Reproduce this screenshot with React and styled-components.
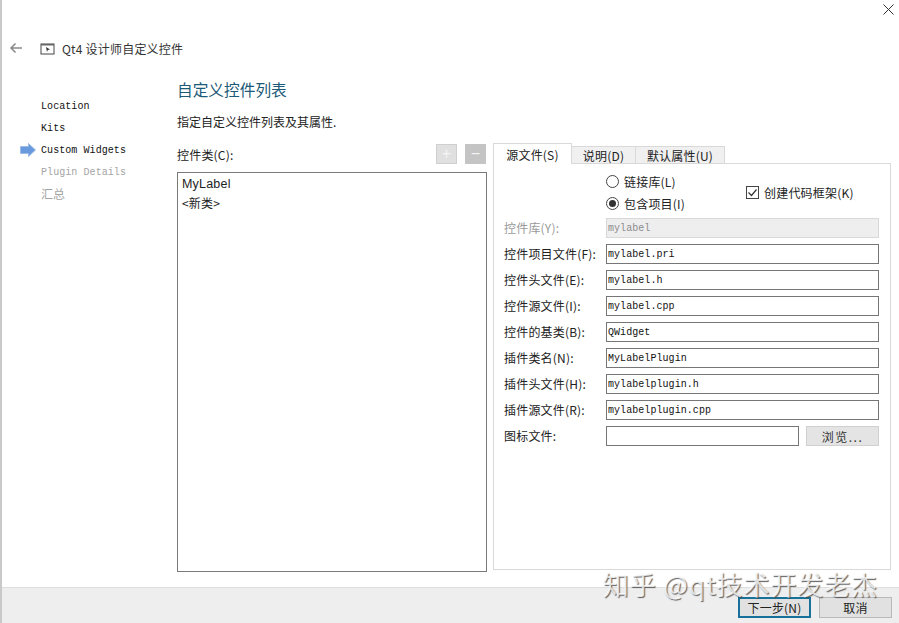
import React from 'react'
import styled, { createGlobalStyle } from 'styled-components'

const GlobalStyle = createGlobalStyle`
  html, body { margin: 0; padding: 0; background: #fff; }
  * { box-sizing: border-box; }
`
const ui = `"Noto Sans CJK SC", "Liberation Sans", sans-serif`
const mono = `"Liberation Mono", "DejaVu Sans Mono", "Noto Sans CJK SC", monospace`

const Wizard = styled.div`
  width: 899px;
  height: 623px;
  position: relative;
  display: flex;
  flex-direction: column;
  background: #fff;
  border-left: 2px solid #c9c9c9;
  color: #222;
  font-family: ${ui};
  font-size: 12px;
  letter-spacing: 0.2px;
  overflow: hidden;
  opacity: 0.999;
`
const Close = styled.svg`
  position: absolute;
  top: 4px;
  right: 5px;
  width: 11px;
  height: 11px;
`
const Header = styled.div`
  height: 28px;
  margin-top: 34px;
  padding-left: 7px;
  display: flex;
  align-items: center;
`
const BackIcon = styled.svg`
  width: 14px;
  height: 12px;
  margin-right: 17px;
`
const WinIcon = styled.svg`
  width: 15px;
  height: 13px;
  margin-right: 7px;
`
const HeaderTitle = styled.span`
  font-size: 12px;
  color: #333;
`
const Body = styled.div`
  flex: 1;
  display: flex;
  min-height: 0;
`
const Steps = styled.div`
  width: 175px;
  padding-top: 33px;
  display: flex;
  flex-direction: column;
  flex-shrink: 0;
`
const Step = styled.div`
  height: 22px;
  padding-left: 17px;
  display: flex;
  align-items: center;
  position: relative;
  font-family: ${mono};
  font-size: ${(p) => (p.$cjk ? '12px' : '10px')};
  letter-spacing: 0.07px;
  color: ${(p) => (p.$off ? '#a4a4a4' : '#111')};
`
const StepName = styled.span`
  margin-left: 22px;
`
const StepArrow = styled.svg`
  position: absolute;
  left: 18px;
  top: 4px;
  width: 16px;
  height: 14px;
`
const Page = styled.div`
  flex: 1;
  display: flex;
  flex-direction: column;
  min-width: 0;
`
const PageTitle = styled.div`
  font-size: 15.7px;
  line-height: 22px;
  height: 22px;
  margin-top: 17px;
  letter-spacing: 0;
  color: #1c5a78;
`
const PageSub = styled.div`
  font-size: 12px;
  line-height: 16px;
  margin-top: 13px;
  letter-spacing: 0;
`
const Columns = styled.div`
  margin-top: 13px;
  display: flex;
  gap: 6px;
`
const ListColumn = styled.div`
  width: 310px;
  display: flex;
  flex-direction: column;
`
const ListHead = styled.div`
  height: 22px;
  display: flex;
  align-items: center;
  justify-content: space-between;
  margin-bottom: 7px;
  padding-right: 1px;
`
const ListTools = styled.div`
  display: flex;
  gap: 8px;
`
const ToolButton = styled.div`
  width: 21px;
  height: 20px;
  display: flex;
  align-items: center;
  justify-content: center;
  background: ${(p) => (p.$dark ? '#c4c4c4' : '#e0e0e0')};
  border: 1px solid ${(p) => (p.$dark ? '#c4c4c4' : '#cfcfcf')};
  color: #f4f4f4;
  font-family: "Liberation Sans", sans-serif;
  font-size: 16px;
  line-height: 1;
`
const ClassList = styled.div`
  width: 310px;
  height: 400px;
  border: 1px solid #7a7a7a;
  padding: 2px 4px;
`
const ListItem = styled.div`
  font-size: ${(p) => (p.$big ? '12.5px' : '12px')};
  line-height: ${(p) => (p.$big ? '18px' : '19px')};
  font-family: ${(p) => (p.$big ? `"Liberation Sans", sans-serif` : ui)};
`
const TabColumn = styled.div`
  width: 398px;
  display: flex;
  flex-direction: column;
`
const TabBar = styled.div`
  display: flex;
  height: 21px;
  align-items: flex-end;
  position: relative;
  z-index: 1;
  margin-bottom: -1px;
`
const Tab = styled.div`
  height: ${(p) => (p.$active ? '21px' : '18px')};
  width: ${(p) => p.$w}px;
  display: flex;
  align-items: center;
  justify-content: center;
  font-size: 12px;
  background: ${(p) => (p.$active ? '#fff' : '#f0f0f0')};
  border: 1px solid #d9d9d9;
  border-bottom: ${(p) => (p.$active ? 'none' : '1px solid #d9d9d9')};
  margin-left: ${(p) => (p.$active ? '0' : '-1px')};
`
const TabPanel = styled.div`
  height: 407px;
  border: 1px solid #d9d9d9;
  padding: 7px 11px 0 10px;
`
const Choices = styled.div`
  height: 47px;
  display: flex;
`
const Radios = styled.div`
  width: 140px;
  margin-left: 102px;
  padding-top: 1px;
  display: flex;
  flex-direction: column;
  gap: 3px;
`
const OptionRow = styled.label`
  display: flex;
  align-items: center;
  height: 19px;
  gap: 5px;
`
const Radio = styled.span`
  width: 13px;
  height: 13px;
  border-radius: 50%;
  border: 1px solid #444;
  background: #fff;
  display: flex;
  align-items: center;
  justify-content: center;
  &::after {
    content: '';
    width: 7px;
    height: 7px;
    border-radius: 50%;
    background: ${(p) => (p.$on ? '#333' : 'transparent')};
  }
`
const CheckWrap = styled.div`
  padding-top: 12px;
`
const CheckBox = styled.svg`
  width: 13px;
  height: 13px;
`
const FormRows = styled.div`
  display: flex;
  flex-direction: column;
  gap: 6px;
`
const FormRow = styled.div`
  height: 20px;
  display: flex;
  align-items: center;
`
const FieldLabel = styled.div`
  width: 102px;
  flex-shrink: 0;
  padding-bottom: 2px;
  color: ${(p) => (p.$off ? '#9a9a9a' : '#222')};
  white-space: nowrap;
`
const Field = styled.div`
  width: ${(p) => (p.$w ? `${p.$w}px` : '274px')};
  height: 20px;
  padding: 1px 1px 0;
  display: flex;
  align-items: center;
  border: 1px solid ${(p) => (p.$off ? '#d8d8d8' : '#767676')};
  background: ${(p) => (p.$off ? '#eeeeee' : '#fff')};
  color: ${(p) => (p.$off ? '#8c8c8c' : '#111')};
  font-family: ${mono};
  font-size: 10px;
  letter-spacing: 0.06px;
`
const BrowseButton = styled.div`
  width: 73px;
  height: 20px;
  margin-left: 7px;
  display: flex;
  align-items: center;
  justify-content: center;
  background: #e4e4e4;
  border: 1px solid #d0d0d0;
  color: #333;
  letter-spacing: 1.5px;
`
const Footer = styled.div`
  height: 36px;
  background: #eeeeee;
  border-top: 1px solid #dedede;
  display: flex;
  align-items: flex-start;
  justify-content: flex-end;
  gap: 8px;
  padding: 9px 7px 0 0;
`
const FootButton = styled.div`
  width: 73px;
  height: 21px;
  display: flex;
  align-items: center;
  justify-content: center;
  background: #e1e1e1;
  border: ${(p) => (p.$primary ? '2px solid #17719a' : '1px solid #b9b9b9')};
`
const Watermark = styled.div`
  position: absolute;
  right: 21px;
  top: 570px;
  font-size: 26px;
  line-height: 28px;
  color: rgba(255, 255, 255, 0.8);
  text-shadow: 1px 1px 1px rgba(70, 70, 70, 0.85);
  letter-spacing: 0.9px;
  white-space: nowrap;
`

const fields = [
  ['控件项目文件(F):', 'mylabel.pri'],
  ['控件头文件(E):', 'mylabel.h'],
  ['控件源文件(I):', 'mylabel.cpp'],
  ['控件的基类(B):', 'QWidget'],
  ['插件类名(N):', 'MyLabelPlugin'],
  ['插件头文件(H):', 'mylabelplugin.h'],
  ['插件源文件(R):', 'mylabelplugin.cpp'],
]

const App = () => {
  return (
    <Wizard>
      <GlobalStyle />
      <Close viewBox="0 0 11 11">
        <path d="M0.5 0.5 L10.5 10.5 M10.5 0.5 L0.5 10.5" stroke="#333" strokeWidth="1" fill="none" />
      </Close>
      <Header>
        <BackIcon viewBox="0 0 14 12">
          <path d="M13 6 H2 M6.5 1.5 L2 6 L6.5 10.5" stroke="#8a8a8a" strokeWidth="1.5" fill="none" />
        </BackIcon>
        <WinIcon viewBox="0 0 15 13">
          <rect x="1" y="2" width="13" height="10" fill="none" stroke="#444" strokeWidth="1" />
          <path d="M1 2 H14 V3.5 H1 Z" fill="#666" />
          <path d="M6 5 L10 7.5 L7.8 8 L7 10 Z" fill="#333" />
        </WinIcon>
        <HeaderTitle>Qt4 设计师自定义控件</HeaderTitle>
      </Header>
      <Body>
        <Steps>
          <Step><StepName>Location</StepName></Step>
          <Step><StepName>Kits</StepName></Step>
          <Step>
            <StepArrow viewBox="0 0 16 14">
              <path d="M0.5 3.5 H8.5 V0.5 L15.5 7 L8.5 13.5 V10.5 H0.5 Z" fill="#6a9ade" stroke="#9dbbe4" strokeWidth="1" />
            </StepArrow>
            <StepName>Custom Widgets</StepName>
          </Step>
          <Step $off><StepName>Plugin Details</StepName></Step>
          <Step $off $cjk><StepName>汇总</StepName></Step>
        </Steps>
        <Page>
          <PageTitle>自定义控件列表</PageTitle>
          <PageSub>指定自定义控件列表及其属性.</PageSub>
          <Columns>
            <ListColumn>
              <ListHead>
                <span>控件类(C):</span>
                <ListTools>
                  <ToolButton>+</ToolButton>
                  <ToolButton $dark>−</ToolButton>
                </ListTools>
              </ListHead>
              <ClassList>
                <ListItem $big>MyLabel</ListItem>
                <ListItem>&lt;新类&gt;</ListItem>
              </ClassList>
            </ListColumn>
            <TabColumn>
              <TabBar>
                <Tab $active $w={79}>源文件(S)</Tab>
                <Tab $w={65}>说明(D)</Tab>
                <Tab $w={90}>默认属性(U)</Tab>
              </TabBar>
              <TabPanel>
                <Choices>
                  <Radios>
                    <OptionRow><Radio />链接库(L)</OptionRow>
                    <OptionRow><Radio $on />包含项目(I)</OptionRow>
                  </Radios>
                  <CheckWrap>
                    <OptionRow>
                      <CheckBox viewBox="0 0 13 13">
                        <rect x="0.5" y="0.5" width="12" height="12" fill="#fff" stroke="#444" />
                        <path d="M2.5 6.5 L5.5 9.5 L10.5 3.5" fill="none" stroke="#333" strokeWidth="1.2" />
                      </CheckBox>
                      创建代码框架(K)
                    </OptionRow>
                  </CheckWrap>
                </Choices>
                <FormRows>
                  <FormRow>
                    <FieldLabel $off>控件库(Y):</FieldLabel>
                    <Field $off>mylabel</Field>
                  </FormRow>
                  {fields.map(([label, value]) => (
                    <FormRow key={label}>
                      <FieldLabel>{label}</FieldLabel>
                      <Field>{value}</Field>
                    </FormRow>
                  ))}
                  <FormRow>
                    <FieldLabel>图标文件:</FieldLabel>
                    <Field $w={193} />
                    <BrowseButton>浏览...</BrowseButton>
                  </FormRow>
                </FormRows>
              </TabPanel>
            </TabColumn>
          </Columns>
        </Page>
      </Body>
      <Footer>
        <FootButton $primary>下一步(N)</FootButton>
        <FootButton>取消</FootButton>
      </Footer>
      <Watermark>知乎 @qt技术开发老杰</Watermark>
    </Wizard>
  )
}

export default App
